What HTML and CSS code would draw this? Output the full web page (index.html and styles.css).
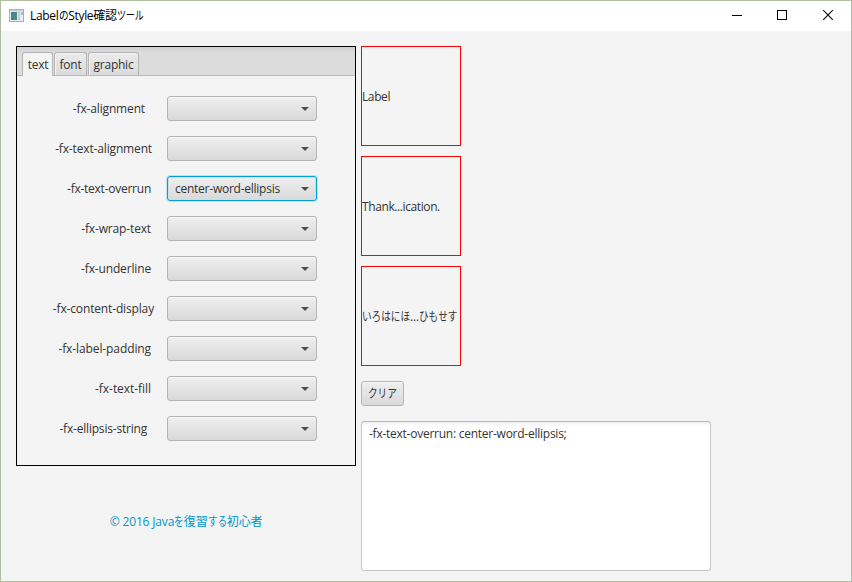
FILE: index.html
```html
<!DOCTYPE html>
<html lang="ja">
<head>
<meta charset="utf-8">
<title>LabelのStyle確認ツール</title>
<link rel="stylesheet" href="styles.css">
</head>
<body>
<div class="window">
  <header class="titlebar">
    <svg class="app-icon" width="15" height="13" viewBox="0 0 15 13">
      <defs><linearGradient id="g" x1="0" y1="0" x2="1" y2="1"><stop offset="0" stop-color="#4a7fae"/><stop offset="1" stop-color="#3f9468"/></linearGradient></defs>
      <rect x=".5" y=".5" width="14" height="12" fill="#e9edf0" stroke="#a9b0b6"/>
      <rect x="1" y="1" width="13" height="1.5" fill="#c9d2da"/>
      <rect x="2" y="3" width="6" height="8" fill="url(#g)"/>
      <rect x="9" y="3" width="2" height="8" fill="#c3cbd2"/>
      <rect x="12" y="3" width="2" height="3" fill="#aebcc8"/>
    </svg>
    <h1 class="title">Label<span class="kana k1">の</span>Style<span class="kanji">確認</span><span class="kana k3">ツール</span></h1>
    <svg class="controls" width="138" height="30" viewBox="0 0 138 30" fill="none" stroke="#000">
      <path d="M19 14.500h10M64.500 9.500h9v9h-9z" shape-rendering="crispEdges"/>
      <path d="M110.200 9.200l9.600 9.600M119.800 9.200l-9.600 9.600" stroke-width="1.100"/>
    </svg>
  </header>
  <main class="content">
    <div class="left">
      <section class="tabpane">
        <nav class="tabs">
          <span class="tab t-text active">text</span><span class="tab t-font">font</span><span class="tab t-graphic">graphic</span>
        </nav>
        <div class="rows">
          <div class="row"><span class="name n1">-fx-alignment</span><span class="combo"></span></div>
          <div class="row"><span class="name n2">-fx-text-alignment</span><span class="combo"></span></div>
          <div class="row"><span class="name n3">-fx-text-overrun</span><span class="combo focused">center-word-ellipsis</span></div>
          <div class="row"><span class="name n4">-fx-wrap-text</span><span class="combo"></span></div>
          <div class="row"><span class="name n5">-fx-underline</span><span class="combo"></span></div>
          <div class="row"><span class="name n6">-fx-content-display</span><span class="combo"></span></div>
          <div class="row"><span class="name n7">-fx-label-padding</span><span class="combo"></span></div>
          <div class="row"><span class="name n8">-fx-text-fill</span><span class="combo"></span></div>
          <div class="row"><span class="name n9">-fx-ellipsis-string</span><span class="combo"></span></div>
        </div>
      </section>
      <a class="link">© 2016 Java<span class="kana k1">を</span><span class="kanji">復習</span><span class="kana k2">する</span><span class="kanji">初心者</span></a>
    </div>
    <div class="right">
      <div class="sample">Label</div>
      <div class="sample s2">Thank...ication.</div>
      <div class="sample"><span class="kana k5">いろはにほ</span>...<span class="kana k4">ひもせす</span></div>
      <button class="clear"><span class="kana k3">クリア</span></button>
      <div class="output">-fx-text-overrun: center-word-ellipsis;</div>
    </div>
  </main>
</div>
</body>
</html>
```
FILE: styles.css
```css
* { box-sizing: border-box; }
body {
  margin: 0;
  font: 12px/16px "Open Sans", "Noto Sans CJK JP", sans-serif;
  letter-spacing: -0.15px;
  color: #333;
}
.window {
  width: 852px;
  height: 582px;
  border: 1px solid #b1bf9f;
  background: #f4f4f4;
  overflow: hidden;
}
.titlebar {
  display: flex;
  align-items: center;
  height: 30px;
  padding-left: 8px;
  background: #fff;
  color: #000;
}
.app-icon { margin-top: -2px; }
.title {
  flex: 1;
  margin: 0 0 0 6px;
  font-size: 12px;
  font-weight: 400;
  letter-spacing: -0.3px;
  white-space: nowrap;
}
.title .k3 { transform: scaleX(.74); }
.kana {
  display: inline-block;
  letter-spacing: 0;
  transform: scaleX(.8);
  transform-origin: 0 50%;
}
.k1 { margin-right: -2.4px; }
.k2 { margin-right: -4.8px; }
.k3 { margin-right: -7.2px; }
.k4 { margin-right: -9.6px; }
.k5 { margin-right: -12px; }
.content {
  display: flex;
  gap: 5px;
  padding: 15px;
}
.left {
  display: flex;
  flex-direction: column;
  width: 340px;
}
.tabpane {
  height: 420px;
  border: 1px solid #000;
}
.tabs {
  display: flex;
  align-items: flex-end;
  gap: 1px;
  height: 29px;
  padding-left: 5px;
  border-bottom: 1px solid #b9b9b9;
  background: linear-gradient(#cfcfcf, #dcdcdc 6px);
}
.tab {
  height: 23px;
  padding-top: 4px;
  border: 1px solid #b5b5b5;
  border-bottom: 0;
  border-radius: 3px 3px 0 0;
  background: linear-gradient(#ebebeb, #dadada);
  box-shadow: inset 1px 1px #f2f2f2;
  text-align: center;
  letter-spacing: -0.25px;
}
.tab.active {
  height: 24px;
  margin-bottom: -1px;
  padding-left: 1px;
  background: #f4f4f4;
}
.t-text { width: 31px; }
.t-font { width: 33px; }
.t-graphic { width: 51px; }
.rows {
  display: flex;
  flex-direction: column;
  gap: 15px;
  padding-top: 20px;
}
.row {
  display: flex;
  align-items: center;
  height: 25px;
}
.name {
  width: 150px;
  padding-right: 16px;
  text-align: right;
  white-space: nowrap;
}
.n1 { padding-right: 22px; }
.n2 { padding-right: 15px; }
.n3 { letter-spacing: -0.25px; }
.n6 { padding-right: 13px; }
.n7 { letter-spacing: -0.1px; }
.n8 { letter-spacing: -0.05px; }
.n9 { padding-right: 20px; letter-spacing: -0.2px; }
.combo {
  display: flex;
  align-items: center;
  justify-content: space-between;
  width: 150px;
  height: 25px;
  padding: 0 7px;
  border: 1px solid #b5b5b5;
  border-radius: 3px;
  background: linear-gradient(#efefef, #d9d9d9);
  box-shadow: inset 0 1px #f8f8f8;
}
.combo::after {
  content: "";
  margin-left: auto;
  border: 4px solid transparent;
  border-top-color: #4d4d4d;
  border-bottom: 0;
}
.combo.focused {
  border-color: #039ed3;
  box-shadow: 0 0 0 1px #bfe4f1, inset 0 0 0 1px #c6dfe8;
  letter-spacing: -0.25px;
}
.link {
  align-self: center;
  margin-top: 48px;
  color: #0096c9;
  white-space: nowrap;
}
.right {
  display: flex;
  flex-direction: column;
  align-items: flex-start;
}
.sample {
  width: 100px;
  height: 100px;
  margin-bottom: 10px;
  border: 1px solid #f00;
  line-height: 100px;
  white-space: nowrap;
}
.sample:first-child,
.s2 { letter-spacing: -0.4px; }
.clear {
  width: 43px;
  height: 25px;
  margin: 5px 0 15px;
  padding: 0;
  border: 1px solid #b5b5b5;
  border-radius: 3px;
  background: linear-gradient(#efefef, #d9d9d9);
  box-shadow: inset 0 1px #f8f8f8;
  font: inherit;
  color: #333;
}
.output {
  width: 350px;
  height: 150px;
  padding: 4px 7px;
  border: 1px solid #c8c8c8;
  border-top-color: #b5b5b5;
  border-radius: 3px;
  background: linear-gradient(#f0f0f0, #fff 4px);
  letter-spacing: -0.25px;
}
```
